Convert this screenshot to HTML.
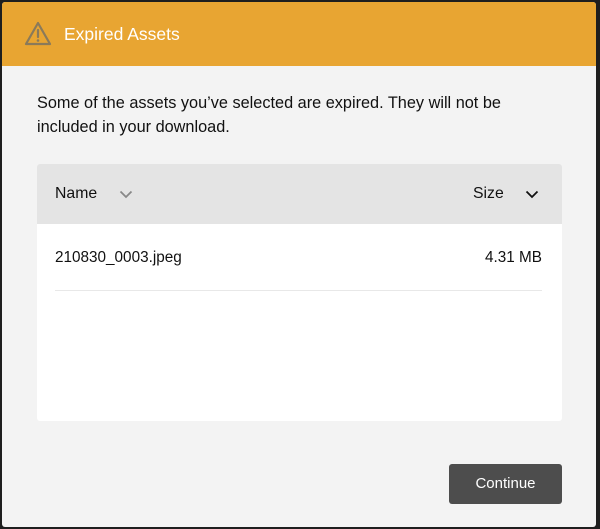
<!DOCTYPE html>
<html><head><style>
body{margin:0;width:600px;height:529px;background:#1e1e1e;font-family:"Liberation Sans",sans-serif;overflow:hidden;position:relative}
.dlg{position:absolute;left:2px;top:2px;width:594px;height:525px;background:#f3f3f3;border-radius:3px;overflow:hidden}
.hd{height:64px;background:#e8a532;position:relative}
.hd .t{position:absolute;left:62px;top:22px;color:#fff;font-size:17.5px}
.msg{position:absolute;left:35px;top:89px;font-size:16.3px;line-height:24px;color:#111;width:520px}
.tbl{position:absolute;left:35px;top:162px;width:525px;height:257px;background:#fff;border-radius:3px;overflow:hidden}
.th{height:60px;background:#e4e4e4;position:relative;font-size:15.8px;color:#111}
.row{position:absolute;left:18px;right:20px;top:60px;height:66px;border-bottom:1px solid #e8e8e8;font-size:15.3px;color:#111}
.btn{position:absolute;left:447px;top:462px;width:113px;height:40px;background:#4d4d4d;border-radius:3px;color:#fff;font-size:15px;text-align:center;line-height:40px}
</style></head><body>
<div class="dlg">
<div class="hd">
<svg style="position:absolute;left:22px;top:19px" width="28" height="26" viewBox="0 0 28 26"><path d="M14 2 L26 23 H2 Z" fill="none" stroke="#8a7a5a" stroke-width="2.2" stroke-linejoin="round"/><path d="M14 9 V16" stroke="#8a7a5a" stroke-width="2.2" stroke-linecap="round"/><circle cx="14" cy="19.5" r="1.3" fill="#8a7a5a"/></svg>
<div class="t">Expired Assets</div>
</div>
<div class="msg">Some of the assets you’ve selected are expired. They will not be included in your download.</div>
<div class="tbl">
<div class="th">
<span style="position:absolute;left:18px;top:21px">Name</span>
<svg style="position:absolute;left:82px;top:26px" width="14" height="9" viewBox="0 0 14 9"><path d="M1.5 1.5 L7 7 L12.5 1.5" fill="none" stroke="#888" stroke-width="1.8"/></svg>
<span style="position:absolute;left:436px;top:21px">Size</span>
<svg style="position:absolute;left:488px;top:26px" width="14" height="9" viewBox="0 0 14 9"><path d="M1.5 1.5 L7 7 L12.5 1.5" fill="none" stroke="#111" stroke-width="1.8"/></svg>
</div>
<div class="row"><span style="position:absolute;left:0;top:25px">210830_0003.jpeg</span><span style="position:absolute;right:0;top:25px">4.31 MB</span></div>
</div>
<div class="btn">Continue</div>
</div>
</body></html>
